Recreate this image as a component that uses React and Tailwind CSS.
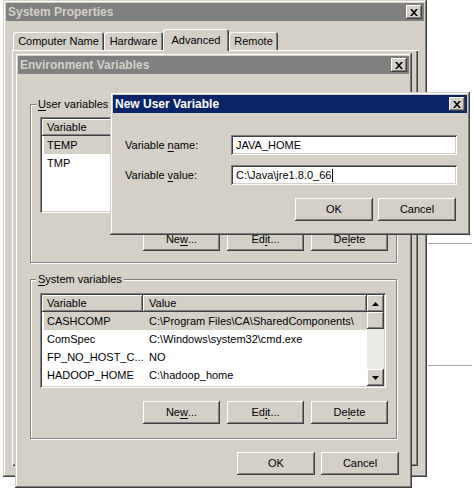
import React from 'react';

// classic 3D edges
const face = 'bg-[#d4d0c8]';
const frame = 'shadow-[inset_-1px_-1px_#404040,inset_1px_1px_#d4d0c8,inset_-2px_-2px_#808080,inset_2px_2px_#ffffff]';
const bevel = 'shadow-[inset_-1px_-1px_#404040,inset_1px_1px_#ffffff,inset_-2px_-2px_#808080,inset_2px_2px_#d4d0c8]';
const sunken = 'shadow-[inset_1px_1px_#808080,inset_-1px_-1px_#ffffff,inset_2px_2px_#404040,inset_-2px_-2px_#d4d0c8]';
const etched = 'border border-[#808080] shadow-[inset_1px_1px_#ffffff,1px_1px_#ffffff]';

function Key({ children }) {
  return <span className="underline underline-offset-[2px]">{children}</span>;
}

function CloseButton() {
  return (
    <div className={`flex h-[14px] w-[16px] items-center justify-center ${face} ${bevel}`}>
      <svg width="8" height="7" viewBox="0 0 8 7">
        <path d="M0 0h2l2 2.2L6 0h2L5 3.5 8 7H6L4 4.8 2 7H0l3-3.5z" fill="#000" />
      </svg>
    </div>
  );
}

function TitleBar({ title, active }) {
  return (
    <div
      className={`flex h-[18px] shrink-0 items-center justify-between pl-[2px] pr-[2px] text-[12px] font-bold ${
        active ? 'bg-[#0a246a] text-white' : 'bg-[#808080] text-[#d4d0c8]'
      }`}
    >
      <span>{title}</span>
      <CloseButton />
    </div>
  );
}

function Button({ children, w = 'w-[77px]' }) {
  return (
    <button type="button" className={`flex h-[23px] ${w} items-center justify-center ${face} ${bevel}`}>
      {children}
    </button>
  );
}

function Arrow({ down }) {
  return (
    <div className={`flex h-[17px] w-[17px] items-center justify-center ${face} ${bevel}`}>
      <svg width="7" height="4" viewBox="0 0 7 4">
        <polygon points={down ? '0,0 7,0 3.5,4' : '3.5,0 7,4 0,4'} fill="#000" />
      </svg>
    </div>
  );
}

function ListView({ rows, h, scroll }) {
  return (
    <div className={`flex ${h} bg-white p-[2px] ${sunken}`}>
      <div className="min-w-0 flex-1 overflow-hidden">
        <div className="flex h-[17px]">
          <div className={`flex w-[101px] items-center pl-[5px] ${face} ${bevel}`}>Variable</div>
          <div className={`flex flex-1 items-center pl-[6px] ${face} ${bevel}`}>Value</div>
        </div>
        {rows.map(([name, value], i) => (
          <div key={name} className={`ml-[2px] flex h-[18px] items-center ${i === 0 ? 'bg-[#d4d0c8]' : ''}`}>
            <span className="w-[99px] shrink-0 pl-[3px] whitespace-nowrap">{name}</span>
            <span className="pl-[6px] whitespace-nowrap">{value}</span>
          </div>
        ))}
      </div>
      {scroll && (
        <div className="flex w-[17px] flex-col bg-[#eceae6]">
          <Arrow />
          <div className={`h-[17px] ${face} ${bevel}`}></div>
          <div className="flex-1"></div>
          <Arrow down />
        </div>
      )}
    </div>
  );
}

function GroupBox({ label, children, className = '' }) {
  return (
    <div className={`relative ${etched} ${className}`}>
      <span className={`absolute -top-[8px] left-[5px] px-[2px] leading-[14px] ${face}`}>{label}</span>
      {children}
    </div>
  );
}

const userVars = [
  ['TEMP', ''],
  ['TMP', ''],
];

const systemVars = [
  ['CASHCOMP', 'C:\\Program Files\\CA\\SharedComponents\\'],
  ['ComSpec', 'C:\\Windows\\system32\\cmd.exe'],
  ['FP_NO_HOST_C...', 'NO'],
  ['HADOOP_HOME', 'C:\\hadoop_home'],
];

const tabs = [
  { label: 'Computer Name', w: 'w-[91px]' },
  { label: 'Hardware', w: 'w-[59px]' },
  { label: 'Advanced', w: 'w-[66px]', selected: true },
  { label: 'Remote', w: 'w-[49px]' },
];

export default function App() {
  return (
    <div className="relative h-[494px] w-[474px] overflow-hidden bg-white font-['Liberation_Sans',Arial,sans-serif] text-[11px] text-black">
      {/* stray lines of whatever sits behind the dialogs */}
      <div className="absolute left-[428px] top-[243px] h-px w-[44px] bg-[#a8a8a8]"></div>
      <div className="absolute left-[428px] top-[365px] h-px w-[44px] bg-[#a8a8a8]"></div>

      {/* System Properties */}
      <div className={`absolute left-[3px] top-0 flex h-[477px] w-[424px] flex-col p-[3px] ${face} ${frame}`}>
        <TitleBar title="System Properties" />
        <div className="mx-[6px] mb-[8px] mt-[8px] flex flex-1 flex-col">
          <div className="flex items-end pl-[1px]">
            {tabs.map((t) =>
              t.selected ? (
                <div
                  key={t.label}
                  className={`relative z-10 -mb-px flex h-[22px] ${t.w} items-start justify-center rounded-t-[3px] pt-[3px] ${face} shadow-[inset_1px_1px_#ffffff,inset_-1px_0_#404040,inset_-2px_0_#808080]`}
                >
                  {t.label}
                </div>
              ) : (
                <div
                  key={t.label}
                  className={`flex h-[18px] ${t.w} items-center justify-center rounded-t-[3px] ${face} shadow-[inset_1px_1px_#ffffff,inset_-1px_0_#404040,inset_-2px_0_#808080]`}
                >
                  {t.label}
                </div>
              )
            )}
          </div>
          <div className={`flex-1 ${face} shadow-[inset_1px_1px_#ffffff,inset_-1px_-1px_#404040,inset_-2px_-2px_#808080]`}></div>
        </div>
      </div>

      {/* Environment Variables */}
      <div className={`absolute left-[15px] top-[53px] flex h-[435px] w-[397px] flex-col p-[3px] ${face} ${frame}`}>
        <TitleBar title="Environment Variables" />
        <div className="flex flex-col px-[12px]">
          <GroupBox label={<><Key>U</Key>ser variables</>} className="mt-[30px] pb-[11px] pl-[9px] pr-[8px] pt-[12px]">
            <div className="mr-[2px]">
              <ListView rows={userVars} h="h-[96px]" />
            </div>
            <div className="mt-[15px] flex justify-end gap-[7px]">
              <Button>Ne<Key>w</Key>...</Button>
              <Button>Ed<Key>i</Key>t...</Button>
              <Button>De<Key>l</Key>ete</Button>
            </div>
          </GroupBox>

          <GroupBox label={<><Key>S</Key>ystem variables</>} className="mt-[16px] pb-[14px] pl-[9px] pr-[8px] pt-[13px]">
            <div className="mr-[2px]">
              <ListView rows={systemVars} h="h-[95px]" scroll />
            </div>
            <div className="mt-[13px] flex justify-end gap-[7px]">
              <Button>Ne<Key>w</Key>...</Button>
              <Button>Ed<Key>i</Key>t...</Button>
              <Button>De<Key>l</Key>ete</Button>
            </div>
          </GroupBox>

          <div className="-mr-[2px] mt-[13px] flex justify-end gap-[6px]">
            <Button w="w-[78px]">OK</Button>
            <Button w="w-[78px]">Cancel</Button>
          </div>
        </div>
      </div>

      {/* New User Variable */}
      <div className={`absolute left-[110px] top-[92px] z-20 flex h-[143px] w-[360px] flex-col p-[3px] ${face} ${frame}`}>
        <TitleBar title="New User Variable" active />
        <div className="flex flex-col pl-[12px] pr-[10px]">
          <div className="mt-[22px] flex items-center">
            <span className="w-[106px]">Variable <Key>n</Key>ame:</span>
            <div className={`flex h-[20px] w-[226px] items-center bg-white pl-[5px] ${sunken}`}>JAVA_HOME</div>
          </div>
          <div className="mt-[10px] flex items-center">
            <span className="w-[106px]">Variable <Key>v</Key>alue:</span>
            <div className={`flex h-[20px] w-[226px] items-center bg-white pl-[5px] ${sunken}`}>
              C:\Java\jre1.8.0_66
              <span className="ml-px inline-block h-[13px] w-px bg-black"></span>
            </div>
          </div>
          <div className="mr-px mt-[13px] flex justify-end gap-[5px]">
            <Button w="w-[78px]">OK</Button>
            <Button w="w-[78px]">Cancel</Button>
          </div>
        </div>
      </div>
    </div>
  );
}
